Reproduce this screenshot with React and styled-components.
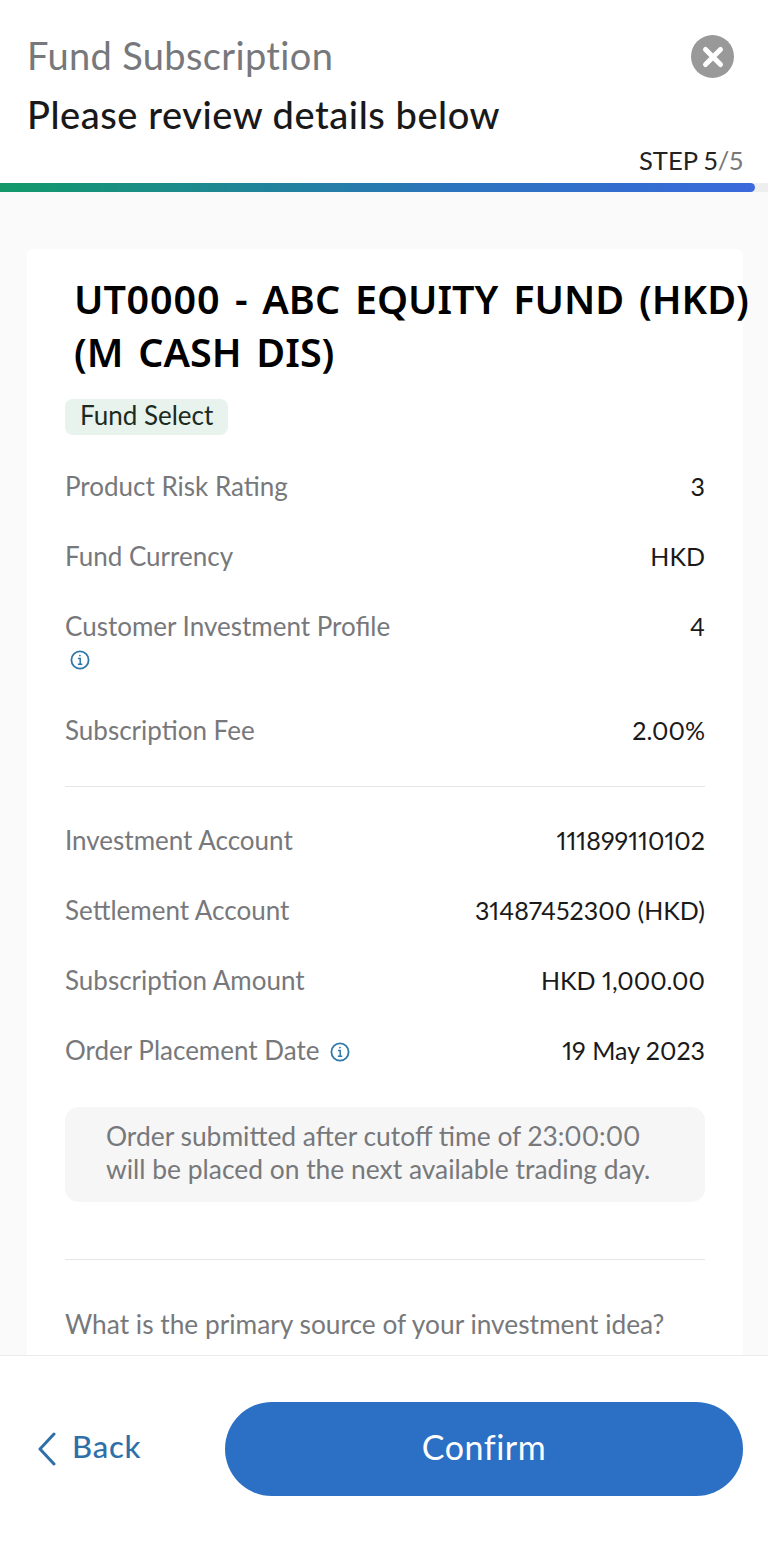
import React from "react";
import styled, { createGlobalStyle } from "styled-components";

const Global = createGlobalStyle`
  html, body { margin: 0; padding: 0; background: #fff; }
  * { box-sizing: border-box; }
`;
const Page = styled.div`
  width: 768px; height: 1542px; display: flex; flex-direction: column; overflow: hidden;
  font-family: Lato, "Noto Sans", sans-serif; background: #fff; font-variant-numeric: proportional-nums;
`;
const Header = styled.header`
  height: 183px; padding: 35px 25px 0 27px; flex: none;
`;
const HeaderTop = styled.div`
  display: flex; justify-content: space-between; align-items: flex-start; padding-right: 9px;
`;
const Eyebrow = styled.div`
  font-size: 38px; line-height: 44px; color: #77787b; letter-spacing: 0.35px; margin-top: -2px;
`;
const CloseBtn = styled.div`
  width: 43px; height: 43px; border-radius: 50%; background: #999; display: flex; align-items: center; justify-content: center;
`;
const Title = styled.h1`
  margin: 14px 0 0; font-size: 38px; line-height: 44px; font-weight: 500; color: #191919; letter-spacing: 0.55px;
`;
const Step = styled.div`
  text-align: right; font-size: 25.5px; line-height: 30px; color: #222; margin-top: 9px;
  span { color: #777; }
`;
const Track = styled.div`
  height: 9px; background: #eeeeee; flex: none;
`;
const Fill = styled.div`
  height: 9px; width: 755px; border-radius: 0 5px 5px 0; background: linear-gradient(90deg, #12996a 0%, #2b74bd 60%, #3a69dc 100%);
`;
const Body = styled.main`
  flex: 1; min-height: 0; overflow: hidden; background: #fafafa; padding: 57px 25px 0 27px;
`;
const Card = styled.section`
  background: #fff; border-radius: 6px; padding: 24px 38px 0; height: 1200px;
`;
const FundName = styled.h2`
  margin: 0 -8px 0 9px; font-family: "Noto Sans", sans-serif; font-size: 39.5px; line-height: 53px; font-weight: 600; color: #000;
  word-spacing: 4.5px; white-space: nowrap;
`;
const Tag = styled.div`
  display: inline-block; margin-top: 20px; height: 36px; padding: 0 15px; border-radius: 8px; background: #e7f3ec;
  font-size: 26px; line-height: 32px; color: #1c2a22;
`;
const Rows = styled.div`
  margin-top: ${p => p.$mt}px; display: flex; flex-direction: column;
`;
const Row = styled.div`
  display: flex; justify-content: space-between; align-items: flex-start; line-height: 34px; margin-bottom: ${p => p.$mb ?? 36}px;
`;
const Label = styled.div`
  color: #77787b; font-size: 26px; max-width: 340px;
`;
const Value = styled.div`
  color: #1a1a1a; font-size: 25px;
`;
const InfoIcon = ({ block }) => (
  <InfoWrap $block={block}>
    <svg width="20" height="20" viewBox="0 0 20 20" fill="none" stroke="#2f78a8" strokeWidth="1.8">
      <circle cx="10" cy="10" r="8.6" />
      <path d="M8 8.6h2.2v5.4M7.9 14.2h4.4" strokeWidth="1.5" />
      <circle cx="9.9" cy="5.6" r="0.9" fill="#2f78a8" stroke="none" />
    </svg>
  </InfoWrap>
);
const InfoWrap = styled.span`
  display: ${p => (p.$block ? "block" : "inline-block")};
  height: 20px; line-height: 20px; margin-left: ${p => (p.$block ? "5px" : "11px")}; margin-top: ${p => (p.$block ? "7px" : "0")};
  vertical-align: -2px;
`;
const Divider = styled.hr`
  border: 0; height: 1px; background: #e6e6e6; margin: ${p => p.$m};
`;
const Notice = styled.div`
  margin-top: 40px; background: #f6f6f6; border-radius: 14px; padding: 13px 20px 15px 41px; height: 95px;
  font-size: 26.4px; line-height: 33px; color: #77787b;
`;
const Question = styled.p`
  margin: 47px 0 0; font-size: 26.3px; line-height: 34px; color: #77787b;
`;
const Footer = styled.footer`
  height: 187px; flex: none; background: #fff; border-top: 1px solid #ebebeb; display: flex; align-items: flex-start; padding: 46px 25px 0 37px;
`;
const Back = styled.div`
  display: flex; align-items: center; width: 188px; height: 94px; gap: 15px; font-size: 31px; font-weight: 500; color: #2f6fa8; letter-spacing: 0.8px;
`;
const BackText = styled.span`
  margin-top: -6px;
`;
const Confirm = styled.button`
  flex: 1; height: 94px; border: 0; border-radius: 47px; background: #2b70c4; color: #fff; font: 400 34px Lato, sans-serif; letter-spacing: 0.5px; padding: 0 0 6px;
`;

export default function App() {
  return (
    <Page>
      <Global />
      <Header>
        <HeaderTop>
          <Eyebrow>Fund Subscription</Eyebrow>
          <CloseBtn>
            <svg width="24" height="24" viewBox="0 0 24 24" stroke="#fff" strokeWidth="5" strokeLinecap="round">
              <path d="M4.5 4.5l15 15M19.5 4.5l-15 15" />
            </svg>
          </CloseBtn>
        </HeaderTop>
        <Title>Please review details below</Title>
        <Step>STEP 5<span>/5</span></Step>
      </Header>
      <Track><Fill /></Track>
      <Body>
        <Card>
          <FundName>UT0000 - ABC EQUITY FUND (HKD)<br />(M CASH DIS)</FundName>
          <Tag>Fund Select</Tag>
          <Rows $mt={34}>
            <Row><Label>Product Risk Rating</Label><Value>3</Value></Row>
            <Row><Label>Fund Currency</Label><Value>HKD</Value></Row>
            <Row $mb={43}><Label>Customer Investment Profile<InfoIcon block /></Label><Value>4</Value></Row>
            <Row $mb={0}><Label>Subscription Fee</Label><Value>2.00%</Value></Row>
          </Rows>
          <Divider $m="39px 0 36px" />
          <Rows $mt={0}>
            <Row><Label>Investment Account</Label><Value>111899110102</Value></Row>
            <Row><Label>Settlement Account</Label><Value>31487452300 (HKD)</Value></Row>
            <Row><Label>Subscription Amount</Label><Value>HKD 1,000.00</Value></Row>
            <Row $mb={0}><Label>Order Placement Date<InfoIcon /></Label><Value>19 May 2023</Value></Row>
          </Rows>
          <Notice>Order submitted after cutoff time of 23:00:00<br />will be placed on the next available trading day.</Notice>
          <Divider $m="57px 0 0" />
          <Question>What is the primary source of your investment idea?</Question>
        </Card>
      </Body>
      <Footer>
        <Back>
          <svg width="20" height="34" viewBox="0 0 20 34" fill="none" stroke="#2f6fa8" strokeWidth="3" strokeLinecap="round" strokeLinejoin="round">
            <path d="M17 2L3 17l14 15" />
          </svg>
          <BackText>Back</BackText>
        </Back>
        <Confirm>Confirm</Confirm>
      </Footer>
    </Page>
  );
}
